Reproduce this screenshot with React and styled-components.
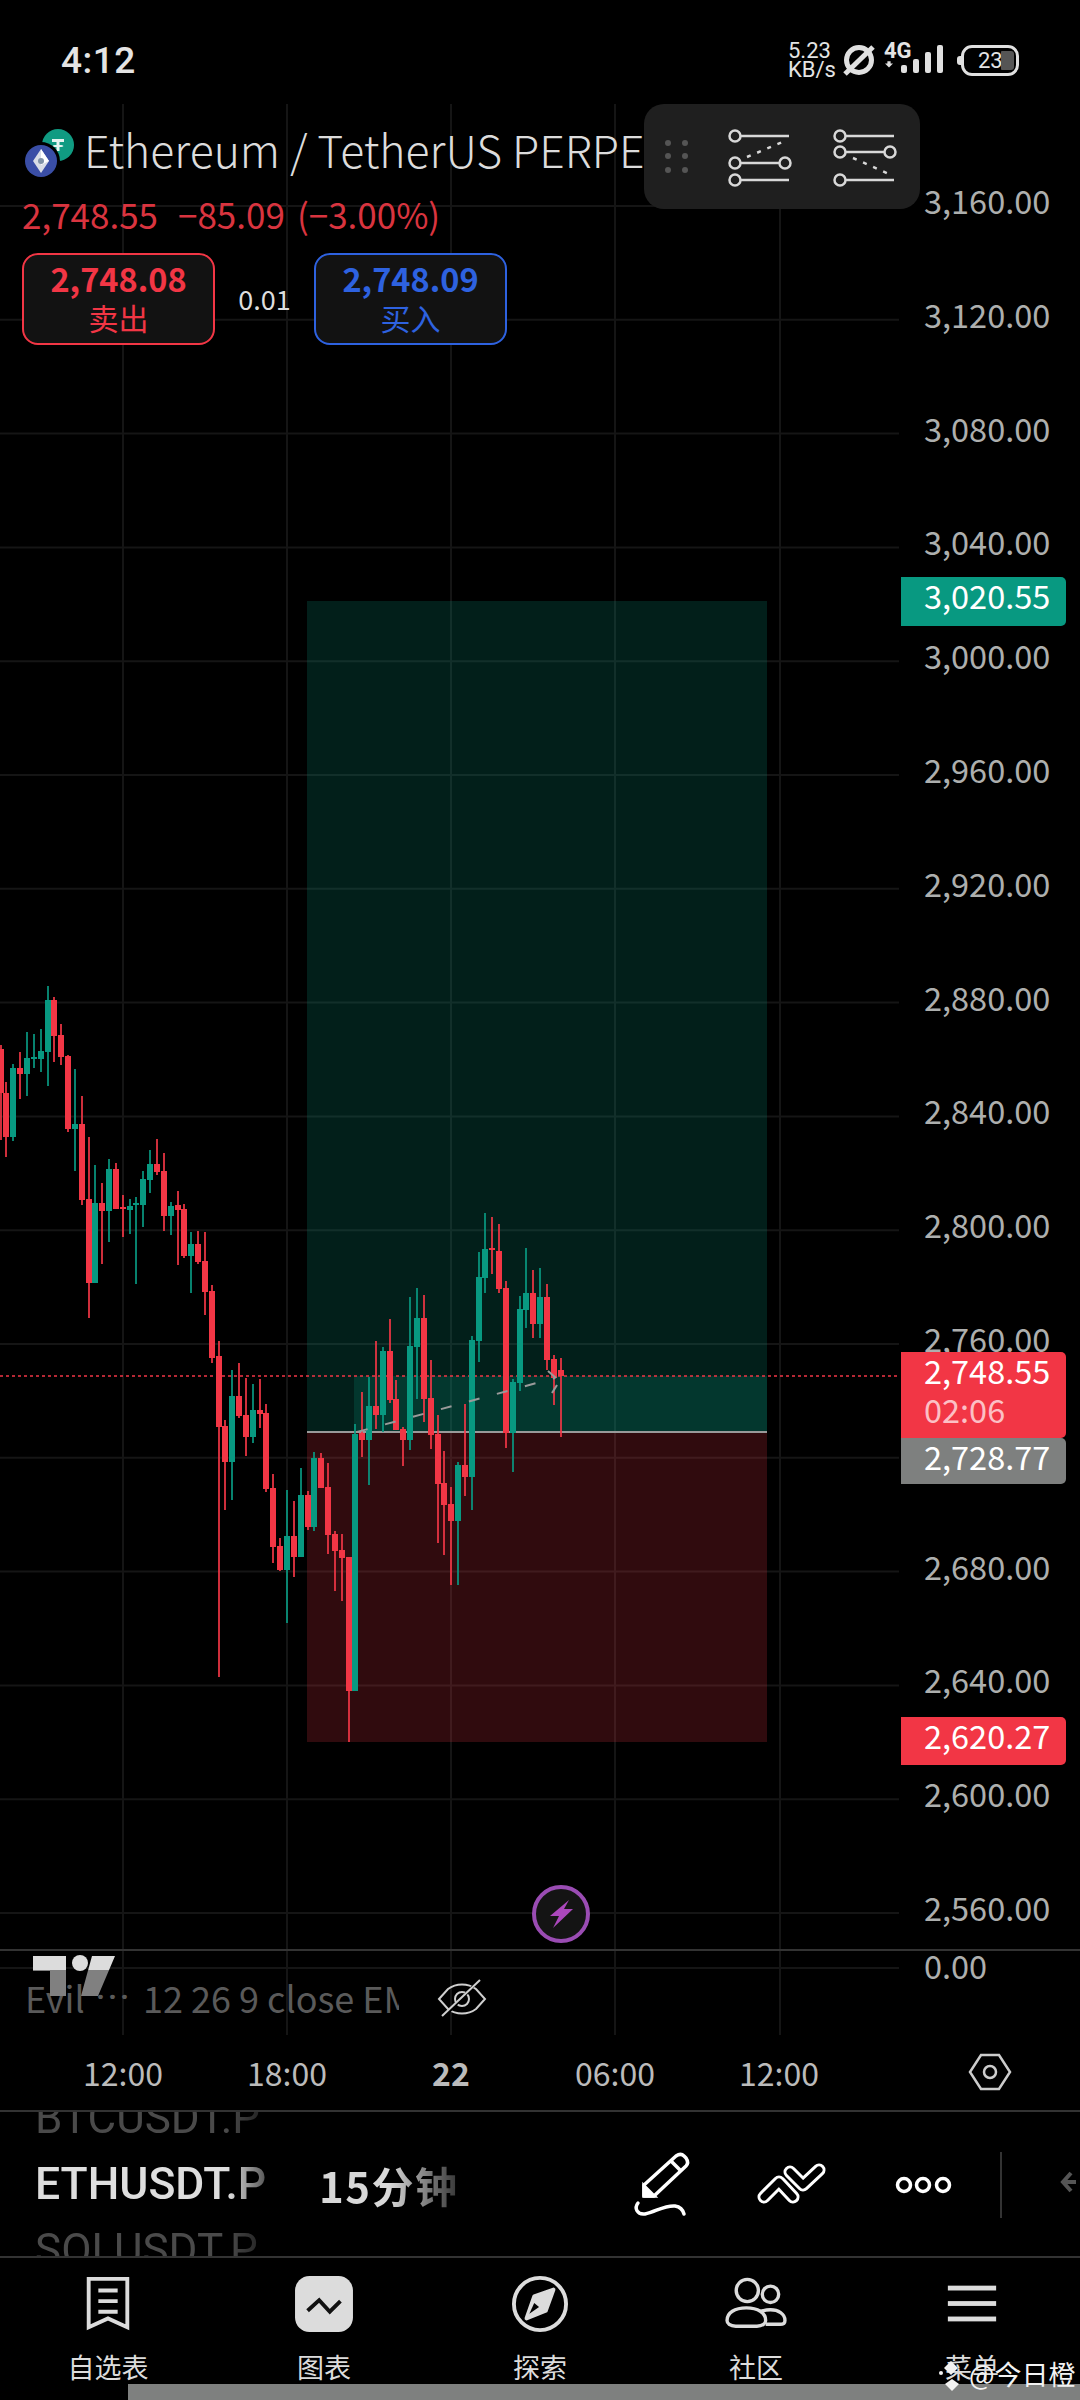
import React from 'react'
import styled, { createGlobalStyle } from 'styled-components'

const RED = '#f23645'
const GREEN = '#089981'
const BLUE = '#2e62e0'
const CJK = '"Noto Sans CJK SC", "Noto Sans", sans-serif'

const GlobalStyle = createGlobalStyle`
    html, body {
        margin: 0;
        padding: 0;
        background: #000;
    }
    body {
        font-family: ${CJK};
    }
`

const Page = styled.div`
    position: relative;
    width: 1080px;
    height: 2400px;
    background: #000;
    overflow: hidden;
    display: flex;
    flex-direction: column;
`

/* status bar */
const StatusBar = styled.div`
    height: 104px;
    box-sizing: border-box;
    padding: 16px 61px 0;
    display: flex;
    align-items: center;
    color: #e4e4e4;
`
const Clock = styled.div`
    font-family: Roboto, sans-serif;
    font-weight: 500;
    font-size: 37px;
    letter-spacing: 0.5px;
`
const StatusRight = styled.div`
    margin-left: auto;
    display: flex;
    align-items: center;
`
const NetSpeed = styled.div`
    width: 44px;
    font-size: 22px;
    line-height: 19px;
    text-align: left;
    font-family: Roboto, sans-serif;
    margin-right: 10px;
`
const Signal = styled.div`
    position: relative;
    margin-left: 8px;
    width: 62px;
    height: 32px;
    svg { display: block; }
    span {
        position: absolute;
        left: 0;
        top: -4px;
        font-family: Roboto, sans-serif;
        font-weight: 700;
        font-size: 22px;
        line-height: 22px;
    }
`
const Battery = styled.div`
    position: relative;
    margin-left: 15px;
    width: 58px;
    height: 31px;
    box-sizing: border-box;
    border: 3px solid #e0e0e0;
    border-radius: 11px;
    font-family: Roboto, sans-serif;
    font-size: 22px;
    line-height: 25px;
    padding-left: 14px;
    &::before {
        content: '';
        position: absolute;
        left: -7px;
        top: 8px;
        width: 4px;
        height: 9px;
        border-radius: 3px 0 0 3px;
        background: #e0e0e0;
    }
`
const BatteryLevel = styled.i`
    position: absolute;
    right: 2px;
    top: 3px;
    width: 13px;
    height: 19px;
    background: #555;
    border-radius: 1px 3px 3px 1px;
`

/* chart */
const ChartArea = styled.div`
    position: relative;
    height: 2008px;
    overflow: hidden;
    display: flex;
    flex-direction: column;
    justify-content: flex-end;
`
const ChartCanvas = styled.svg`
    position: absolute;
    left: 0;
    top: 0;
`
const Legend = styled.div`
    position: absolute;
    left: 22px;
    top: 17px;
    width: 640px;
    overflow: hidden;
`
const TitleRow = styled.div`
    display: flex;
    align-items: center;
    gap: 6px;
    height: 56px;
    color: #dcdcdc;
    font-size: 44.5px;
    font-weight: 300;
    line-height: 56px;
    white-space: nowrap;
    svg { flex-shrink: 0; margin-top: 8px; }
`
const PriceRow = styled.div`
    display: flex;
    height: 44px;
    margin-top: 15px;
    color: #d9343f;
    font-size: 35px;
    line-height: 44px;
    white-space: nowrap;
    span:nth-child(1) { margin-right: 20px; }
    span:nth-child(2) { margin-right: 12px; }
`
const QuoteRow = styled.div`
    display: flex;
    align-items: center;
    margin-top: 17px;
`
const QuoteButton = styled.div`
    width: 193px;
    height: 92px;
    box-sizing: border-box;
    border: 2px solid ${p => p.$color};
    border-radius: 16px;
    background: #121212;
    color: ${p => p.$color};
    text-align: center;
    b {
        display: block;
        font-size: 32.5px;
        line-height: 40px;
        margin-top: 3px;
    }
    span {
        display: block;
        font-size: 30px;
        line-height: 36px;
        margin-top: 1px;
    }
`
const Spread = styled.div`
    width: 99px;
    text-align: center;
    color: #ddd;
    font-size: 27px;
    line-height: 32px;
`
const ToolPanel = styled.div`
    position: absolute;
    left: 644px;
    top: 0;
    width: 276px;
    height: 105px;
    border-radius: 20px;
    background: #1f1f1f;
`
const PanelIcon = styled.svg`
    position: absolute;
    left: ${p => p.$left}px;
    top: ${p => p.$top}px;
`
const PriceAxis = styled.div`
    position: absolute;
    left: 924px;
    top: 39px;
    display: flex;
    flex-direction: column;
`
const AxisPrice = styled.div`
    height: 113.8px;
    line-height: 113.8px;
    color: #adafae;
    font-size: 32.5px;
`
const ZeroPrice = styled.div`
    position: absolute;
    left: 924px;
    top: 1839px;
    color: #adafae;
    font-size: 32.5px;
    line-height: 44px;
`
const PriceBadge = styled.div`
    position: absolute;
    left: 901px;
    top: ${p => p.$top}px;
    width: 165px;
    height: ${p => p.$height}px;
    padding-left: 23px;
    box-sizing: border-box;
    background: ${p => p.$bg};
    border-radius: 0 5px 5px 0;
    color: #fff;
    font-size: 32.5px;
    line-height: 36px;
    small {
        display: block;
        font-size: 32.5px;
        line-height: 42px;
        color: #fcc0c5;
    }
`
const ZapButton = styled.div`
    position: absolute;
    left: 532px;
    top: 1781px;
    width: 58px;
    height: 58px;
    box-sizing: border-box;
    border: 4px solid #9a4cb3;
    border-radius: 50%;
    background: #141414;
    display: flex;
    align-items: center;
    justify-content: center;
`
const IndicatorLegend = styled.div`
    position: absolute;
    left: 25px;
    top: 1870px;
    width: 374px;
    height: 46px;
    overflow: hidden;
    display: flex;
    white-space: nowrap;
    color: #5a5a5a;
    font-size: 36px;
    line-height: 46px;
`
const IndicatorName = styled.span`
    width: 71px;
    flex-shrink: 0;
`
const IndicatorDots = styled.span`
    width: 47px;
    flex-shrink: 0;
    font-family: Roboto, sans-serif;
    font-weight: 700;
    font-size: 30px;
    letter-spacing: 3px;
`
const TvLogo = styled.svg`
    position: absolute;
    left: 30px;
    top: 1850px;
`
const EyeOff = styled.svg`
    position: absolute;
    left: 436px;
    top: 1873px;
`
const TimeAxis = styled.div`
    position: relative;
    height: 77px;
    padding-left: 41px;
    display: grid;
    grid-template-columns: repeat(5, 164px) 1fr;
    align-items: center;
    border-bottom: 2px solid #333;
`
const TimeLabel = styled.div`
    text-align: center;
    color: #bbb;
    font-size: 32px;
    font-weight: ${p => (p.$bold ? 700 : 400)};
`
const GearCell = styled.div`
    display: flex;
    padding-left: 107px;
    svg { display: block; }
`

/* symbol bar */
const SymbolBar = styled.div`
    position: relative;
    height: 146px;
    box-sizing: border-box;
    border-bottom: 2px solid #333;
    display: flex;
    align-items: center;
    overflow: hidden;
`
const Wheel = styled.div`
    display: flex;
    flex-direction: column;
    justify-content: center;
    height: 144px;
    margin-left: 35px;
    width: 236px;
    overflow: hidden;
    -webkit-mask-image: linear-gradient(90deg, #000 82%, rgba(0,0,0,0.3) 100%);
    mask-image: linear-gradient(90deg, #000 82%, rgba(0,0,0,0.3) 100%);
`
const WheelItem = styled.div`
    height: 66px;
    line-height: 66px;
    flex-shrink: 0;
    white-space: nowrap;
    font-family: Roboto, sans-serif;
    font-size: ${p => (p.$active ? 44.5 : 44)}px;
    font-weight: ${p => (p.$active ? 500 : 400)};
    color: ${p => (p.$active ? '#dedede' : '#4a4a4a')};
`
const Interval = styled.div`
    margin-left: 48px;
    font-size: 42px;
    font-weight: 700;
    letter-spacing: 1.5px;
    white-space: nowrap;
    background: linear-gradient(90deg, #d8d8d8 50%, #333 100%);
    -webkit-background-clip: text;
    background-clip: text;
    -webkit-text-fill-color: transparent;
`
const SymbolTools = styled.svg`
    position: absolute;
    left: 0;
    top: 0;
`

/* bottom tabs */
const TabBar = styled.div`
    height: 126px;
    display: grid;
    grid-template-columns: repeat(5, 216px);
`
const Tab = styled.div`
    display: flex;
    flex-direction: column;
    align-items: center;
    color: #dcdcdc;
    font-size: 27px;
    line-height: 34px;
    overflow: hidden;
    svg {
        display: block;
        margin-top: 18px;
        margin-bottom: 18px;
    }
`
const HomeBar = styled.div`
    position: relative;
    height: 16px;
    margin-left: 128px;
    background: #7e807f;
`
const Watermark = styled.div`
    position: absolute;
    left: 938px;
    top: 2354px;
    display: flex;
    align-items: center;
    gap: 3px;
    color: #f2f2f2;
    font-size: 27px;
    line-height: 40px;
    white-space: nowrap;
`

const PRICES = ['3,160.00', '3,120.00', '3,080.00', '3,040.00', '3,000.00', '2,960.00', '2,920.00', '2,880.00', '2,840.00', '2,800.00', '2,760.00', '2,720.00', '2,680.00', '2,640.00', '2,600.00', '2,560.00']

// x, wick top, wick bottom, body top, body bottom, colour
const CANDLES = [
    [1, 1045, 1140, 1049, 1093, 'r'], [6, 1082, 1157, 1093, 1137, 'r'], [13, 1064, 1141, 1068, 1137, 'g'],
    [20, 1052, 1099, 1068, 1074, 'r'], [27, 1032, 1096, 1058, 1074, 'g'], [34, 1034, 1068, 1057, 1059, 'g'],
    [41, 1029, 1072, 1051, 1059, 'g'], [48, 986, 1086, 1000, 1052, 'g'], [54, 997, 1062, 1000, 1036, 'r'],
    [61, 1024, 1065, 1035, 1057, 'r'], [68, 1055, 1132, 1056, 1129, 'r'], [75, 1069, 1171, 1124, 1129, 'g'],
    [82, 1096, 1205, 1124, 1200, 'r'], [89, 1137, 1318, 1199, 1283, 'r'], [95, 1165, 1283, 1203, 1283, 'g'],
    [102, 1183, 1264, 1203, 1211, 'r'], [109, 1159, 1242, 1169, 1211, 'g'], [116, 1163, 1209, 1169, 1209, 'r'],
    [123, 1195, 1237, 1207, 1209, 'r'], [130, 1199, 1234, 1206, 1210, 'g'], [136, 1197, 1284, 1203, 1205, 'g'],
    [143, 1171, 1227, 1179, 1205, 'g'], [150, 1150, 1193, 1164, 1180, 'g'], [157, 1139, 1175, 1164, 1172, 'r'],
    [164, 1153, 1231, 1171, 1216, 'r'], [171, 1202, 1235, 1206, 1216, 'g'], [178, 1191, 1265, 1205, 1210, 'r'],
    [184, 1204, 1258, 1209, 1256, 'r'], [191, 1232, 1293, 1244, 1256, 'g'], [198, 1231, 1264, 1244, 1262, 'r'],
    [205, 1232, 1315, 1261, 1292, 'r'], [212, 1285, 1363, 1291, 1358, 'r'], [219, 1341, 1677, 1356, 1427, 'r'],
    [225, 1420, 1510, 1426, 1462, 'r'], [232, 1370, 1500, 1396, 1462, 'g'], [239, 1363, 1418, 1396, 1416, 'r'],
    [246, 1378, 1456, 1415, 1437, 'r'], [253, 1384, 1443, 1410, 1437, 'g'], [260, 1379, 1428, 1410, 1414, 'r'],
    [266, 1404, 1492, 1413, 1489, 'r'], [273, 1474, 1563, 1488, 1547, 'r'], [280, 1538, 1571, 1546, 1570, 'r'],
    [287, 1490, 1623, 1536, 1570, 'g'], [294, 1501, 1577, 1536, 1557, 'r'], [301, 1468, 1557, 1495, 1557, 'g'],
    [308, 1491, 1530, 1495, 1527, 'r'], [314, 1452, 1531, 1458, 1527, 'g'], [321, 1453, 1488, 1458, 1488, 'r'],
    [328, 1463, 1554, 1487, 1535, 'r'], [335, 1531, 1591, 1534, 1551, 'r'], [342, 1534, 1601, 1550, 1558, 'r'],
    [349, 1557, 1742, 1557, 1691, 'r'], [355, 1424, 1691, 1434, 1691, 'g'], [362, 1392, 1457, 1433, 1440, 'r'],
    [369, 1377, 1485, 1406, 1440, 'g'], [376, 1341, 1429, 1406, 1415, 'r'], [383, 1347, 1432, 1351, 1415, 'g'],
    [390, 1319, 1403, 1351, 1400, 'r'], [396, 1380, 1430, 1399, 1430, 'r'], [403, 1427, 1466, 1429, 1440, 'r'],
    [410, 1297, 1450, 1346, 1440, 'g'], [417, 1288, 1399, 1318, 1347, 'g'], [424, 1295, 1422, 1318, 1399, 'r'],
    [431, 1360, 1449, 1398, 1435, 'r'], [438, 1415, 1543, 1434, 1484, 'r'], [444, 1451, 1555, 1483, 1505, 'r'],
    [451, 1487, 1585, 1504, 1521, 'r'], [458, 1462, 1585, 1465, 1521, 'g'], [465, 1404, 1496, 1465, 1477, 'r'],
    [472, 1336, 1510, 1340, 1477, 'g'], [479, 1252, 1362, 1277, 1341, 'g'], [485, 1213, 1293, 1249, 1278, 'g'],
    [492, 1217, 1274, 1248, 1250, 'r'], [499, 1224, 1293, 1251, 1289, 'r'], [506, 1281, 1448, 1288, 1433, 'r'],
    [513, 1379, 1472, 1382, 1433, 'g'], [520, 1296, 1391, 1309, 1383, 'g'], [526, 1248, 1328, 1293, 1310, 'g'],
    [533, 1270, 1338, 1293, 1324, 'r'], [540, 1268, 1338, 1297, 1324, 'g'], [547, 1284, 1370, 1297, 1360, 'r'],
    [554, 1355, 1405, 1359, 1378, 'r'], [561, 1358, 1437, 1370, 1376, 'r'],
]

const VERTICALS = [123, 287, 451, 615, 780]

const Candle = ({ x, wt, wb, bt, bb, c }) => {
    const color = c === 'r' ? RED : GREEN
    return (
        <g fill={color}>
            <rect x={x - 1} y={wt} width="2" height={wb - wt} opacity="0.85" />
            <rect x={x - 3} y={bt} width="6" height={Math.max(bb - bt, 2)} />
        </g>
    )
}

const Chart = () => (
    <ChartCanvas width="1080" height="2008" viewBox="0 104 1080 2008">
        <g stroke="#151515" strokeWidth="2">
            {VERTICALS.map(x => <line key={x} x1={x} x2={x} y1="104" y2="2035" />)}
            {PRICES.map((p, i) => <line key={p} x1="0" x2="899" y1={206 + 113.8 * i} y2={206 + 113.8 * i} />)}
            <line x1="0" x2="899" y1="1968" y2="1968" />
        </g>
        <rect x="307" y="601" width="460" height="831" fill={GREEN} fillOpacity="0.2" />
        <rect x="354" y="1376" width="413" height="56" fill={GREEN} fillOpacity="0.2" />
        <rect x="307" y="1432" width="460" height="310" fill={RED} fillOpacity="0.2" />
        <line x1="307" x2="767" y1="1432" y2="1432" stroke="#999" strokeWidth="2" />
        <line x1="0" x2="900" y1="1376" y2="1376" stroke={RED} strokeOpacity="0.75" strokeWidth="2" strokeDasharray="3 3" />
        {CANDLES.map(([x, wt, wb, bt, bb, c]) => (
            <Candle key={x} x={x} wt={wt} wb={wb} bt={bt} bb={bb} c={c} />
        ))}
        <g stroke="#9a9a9a" strokeWidth="2" fill="none">
            <line x1="357" y1="1432" x2="555" y2="1378" strokeDasharray="11 18" />
            <line x1="548" y1="1371" x2="556" y2="1378" />
            <line x1="557" y1="1385" x2="552" y2="1393" />
        </g>
        <line x1="0" x2="1080" y1="1950" y2="1950" stroke="#333" strokeWidth="2" />
    </ChartCanvas>
)

const CoinPair = () => (
    <svg width="56" height="52" viewBox="22 124 56 52">
        <circle cx="58" cy="142" r="16" fill="#109b82" />
        <path d="M52 136h12v3h-4.500v3c2.500 0 4 .5 4 1s-1.500 1-4 1v4h-3v-4c-2.500 0-4-.5-4-1s1.500-1 4-1v-3H52z" fill="#e6f4f0" />
        <circle cx="41" cy="158" r="19" fill="#000" />
        <circle cx="41" cy="158" r="16" fill="#3a4ea6" />
        <path d="M41 146l8 12-8 12-8-12z" fill="#d9dde6" />
        <path d="M41 146l8 12-8 4z" fill="#fff" />
        <circle cx="41" cy="158" r="3" fill="#8193a8" />
    </svg>
)

const LineToolUp = () => (
    <PanelIcon $left={82} $top={24} width="72" height="64" viewBox="726 128 72 64" fill="none" stroke="#d8d8d8" strokeWidth="2.500">
        <circle cx="735" cy="136" r="5.500" />
        <line x1="741" y1="136" x2="789" y2="136" />
        <circle cx="735" cy="163" r="5.500" />
        <line x1="741" y1="163" x2="779" y2="163" />
        <circle cx="785" cy="163" r="5.500" />
        <circle cx="735" cy="180" r="5.500" />
        <line x1="741" y1="180" x2="789" y2="180" />
        <line x1="747" y1="157" x2="785" y2="141" strokeDasharray="4 7" />
    </PanelIcon>
)

const LineToolDown = () => (
    <PanelIcon $left={187} $top={24} width="72" height="64" viewBox="831 128 72 64" fill="none" stroke="#d8d8d8" strokeWidth="2.500">
        <circle cx="840" cy="136" r="5.500" />
        <line x1="846" y1="136" x2="894" y2="136" />
        <circle cx="840" cy="152" r="5.500" />
        <line x1="846" y1="152" x2="884" y2="152" />
        <circle cx="890" cy="152" r="5.500" />
        <circle cx="840" cy="180" r="5.500" />
        <line x1="846" y1="180" x2="894" y2="180" />
        <line x1="853" y1="158" x2="889" y2="174" strokeDasharray="4 7" />
    </PanelIcon>
)

const App = () => (
    <Page>
        <GlobalStyle />
        <StatusBar>
            <Clock>4:12</Clock>
            <StatusRight>
                <NetSpeed>5.23<br />KB/s</NetSpeed>
                <svg width="34" height="34" viewBox="0 0 34 34" fill="none" stroke="#e0e0e0" strokeWidth="5">
                    <circle cx="17" cy="17" r="12.500" />
                    <path d="M3 31L31 4" />
                </svg>
                <Signal>
                    <span>4G</span>
                    <svg width="62" height="32" viewBox="0 0 62 32" fill="#e0e0e0">
                        <path d="M3 24h4v3h3l-5 5-5-5h3z" transform="translate(1 -2) scale(.8)" />
                        <rect x="17" y="21" width="6" height="8" rx="2" />
                        <rect x="29" y="15" width="6" height="14" rx="2" />
                        <rect x="41" y="8" width="6" height="21" rx="2" />
                        <rect x="53" y="1" width="6" height="28" rx="2" />
                    </svg>
                </Signal>
                <Battery>23<BatteryLevel /></Battery>
            </StatusRight>
        </StatusBar>

        <ChartArea>
            <Chart />
            <Legend>
                <TitleRow>
                    <CoinPair />
                    <span>Ethereum / TetherUS PERPETUAL CONTRACT</span>
                </TitleRow>
                <PriceRow>
                    <span>2,748.55</span>
                    <span>−85.09</span>
                    <span>(−3.00%)</span>
                </PriceRow>
                <QuoteRow>
                    <QuoteButton $color={RED}>
                        <b>2,748.08</b>
                        <span>卖出</span>
                    </QuoteButton>
                    <Spread>0.01</Spread>
                    <QuoteButton $color={BLUE}>
                        <b>2,748.09</b>
                        <span>买入</span>
                    </QuoteButton>
                </QuoteRow>
            </Legend>
            <ToolPanel>
                <PanelIcon $left={16} $top={30} width="40" height="50" viewBox="0 0 40 50" fill="#555">
                    <circle cx="8" cy="9" r="3" /><circle cx="25" cy="9" r="3" />
                    <circle cx="8" cy="22" r="3" /><circle cx="25" cy="22" r="3" />
                    <circle cx="8" cy="36" r="3" /><circle cx="25" cy="36" r="3" />
                </PanelIcon>
                <LineToolUp />
                <LineToolDown />
            </ToolPanel>
            <PriceAxis>
                {PRICES.map(p => <AxisPrice key={p}>{p}</AxisPrice>)}
            </PriceAxis>
            <ZeroPrice>0.00</ZeroPrice>
            <PriceBadge $top={473} $height={49} $bg={GREEN}>3,020.55</PriceBadge>
            <PriceBadge $top={1248} $height={86} $bg={RED}>2,748.55<small>02:06</small></PriceBadge>
            <PriceBadge $top={1334} $height={46} $bg="#7e807f">2,728.77</PriceBadge>
            <PriceBadge $top={1613} $height={48} $bg={RED}>2,620.27</PriceBadge>
            <ZapButton>
                <svg width="26" height="30" viewBox="0 0 26 30" fill="#ab47bc">
                    <path d="M21 1L2 17h9L5 29l20-19h-9z" />
                </svg>
            </ZapButton>
            <IndicatorLegend>
                <IndicatorName>Evil</IndicatorName>
                <IndicatorDots>···</IndicatorDots>
                <span>12 26 9 close EMA</span>
            </IndicatorLegend>
            <TvLogo width="90" height="46" viewBox="30 1954 90 46">
                <defs>
                    <linearGradient id="tv" x1="0" y1="0" x2="0" y2="1">
                        <stop offset="0.34" stopColor="#dcdcdc" />
                        <stop offset="0.36" stopColor="#808080" />
                    </linearGradient>
                </defs>
                <path d="M33 1956h33v40H50v-25H33z M92 1956h23l-17 40H81z" fill="url(#tv)" />
                <circle cx="80" cy="1963" r="8" fill="#dcdcdc" />
            </TvLogo>
            <EyeOff width="52" height="46" viewBox="0 0 52 46" fill="none" stroke="#cfcfcf" strokeWidth="2">
                <path d="M3 22L12 12C20 6 32 6 40 12L49 22L40 32C32 38 20 38 12 32Z" />
                <circle cx="26" cy="22" r="7" />
                <line x1="8" y1="40" x2="44" y2="2" strokeWidth="3" stroke="#000" />
                <line x1="6" y1="39" x2="44" y2="3" />
            </EyeOff>
            <TimeAxis>
                <TimeLabel>12:00</TimeLabel>
                <TimeLabel>18:00</TimeLabel>
                <TimeLabel $bold>22</TimeLabel>
                <TimeLabel>06:00</TimeLabel>
                <TimeLabel>12:00</TimeLabel>
                <GearCell>
                    <svg width="44" height="38" viewBox="0 0 44 38" fill="none" stroke="#ccc" strokeWidth="2.500">
                        <path d="M13 2h18l11 17-11 17H13L2 19z" />
                        <circle cx="22" cy="19" r="6" />
                    </svg>
                </GearCell>
            </TimeAxis>
        </ChartArea>

        <SymbolBar>
            <Wheel>
                <WheelItem>BTCUSDT.P</WheelItem>
                <WheelItem $active>ETHUSDT.P</WheelItem>
                <WheelItem>SOLUSDT.P</WheelItem>
            </Wheel>
            <Interval>15分钟</Interval>
            <SymbolTools width="1080" height="146" viewBox="0 2112 1080 146" fill="none" stroke="#fff" strokeWidth="3.500">
                <path d="M644 2196v-11l32-29c3-2 6-2 8 0l2 2c2 3 2 6 0 8l-32 30z" strokeLinejoin="round" />
                <path d="M671 2161l10 10" />
                <path d="M644 2196v-10l10 10z" fill="#fff" />
                <path d="M638 2203c-4 5-1 12 7 11c10-2 20-9 30-8c6 1 8 4 9 8" strokeLinecap="round" />
                <g strokeLinecap="round" strokeLinejoin="round">
                    <path d="M764 2197l15-15 14 15" strokeWidth="13" />
                    <path d="M790 2172l13 13 16-15" strokeWidth="13" />
                    <path d="M764 2197l15-15 14 15" strokeWidth="7" stroke="#000" />
                    <path d="M790 2172l13 13 16-15" strokeWidth="7" stroke="#000" />
                </g>
                <circle cx="904" cy="2185" r="6.500" strokeWidth="3.500" />
                <circle cx="923" cy="2185" r="6.500" strokeWidth="3.500" />
                <circle cx="943" cy="2185" r="6.500" strokeWidth="3.500" />
                <line x1="1001" y1="2152" x2="1001" y2="2218" stroke="#333" strokeWidth="2" />
                <path d="M1076 2182h-12M1071 2173l-8 9 8 9" stroke="#555" strokeWidth="4" />
            </SymbolTools>
        </SymbolBar>

        <TabBar>
            <Tab>
                <svg width="46" height="58" viewBox="0 0 46 58" fill="none" stroke="#dcdcdc" strokeWidth="4">
                    <path d="M3 3h40v50L23 44 3 53z" />
                    <path d="M13 15h20M13 26h20M13 37h20" />
                </svg>
                自选表
            </Tab>
            <Tab>
                <svg width="60" height="58" viewBox="0 0 60 58">
                    <rect width="60" height="58" rx="15" fill="#dcdcdc" />
                    <path d="M13 36l12-11 11 12 11-11" fill="none" stroke="#111" strokeWidth="4" />
                </svg>
                图表
            </Tab>
            <Tab>
                <svg width="62" height="58" viewBox="0 0 62 58" fill="none" stroke="#dcdcdc" strokeWidth="4">
                    <circle cx="31" cy="29" r="27" />
                    <path d="M45 14L25 21 17 44 37 36z" fill="#dcdcdc" strokeLinejoin="round" />
                    <path d="M20 39L25 28 30 32z" fill="#000" stroke="none" />
                </svg>
                探索
            </Tab>
            <Tab>
                <svg width="66" height="58" viewBox="0 0 66 58" fill="none" stroke="#dcdcdc" strokeWidth="3.500">
                    <circle cx="24" cy="15" r="11.500" />
                    <circle cx="48" cy="19" r="8.500" />
                    <path d="M12 52h22c6 0 9-3 9-6c0-8-8-13-20-13S3 38 3 46c0 3 3 6 9 6z" />
                    <path d="M43 50h15c3 0 5-1 5-4c0-7-7-11-15-11c-5 0-8 1-11 2" />
                </svg>
                社区
            </Tab>
            <Tab>
                <svg width="50" height="58" viewBox="0 0 50 58" fill="#dcdcdc">
                    <rect y="10" width="50" height="5" />
                    <rect y="26" width="50" height="5" />
                    <rect y="42" width="50" height="5" />
                </svg>
                菜单
            </Tab>
        </TabBar>
        <HomeBar />
        <Watermark>
            <svg width="28" height="34" viewBox="0 0 28 34" fill="#f2f2f2">
                <circle cx="3" cy="16" r="2" />
                <path d="M13 4l7 7-7 7-7-7z" />
                <path d="M14 22l7 5-7 7-7-7z" />
            </svg>
            <span>@今日橙</span>
        </Watermark>
    </Page>
)

export default App
